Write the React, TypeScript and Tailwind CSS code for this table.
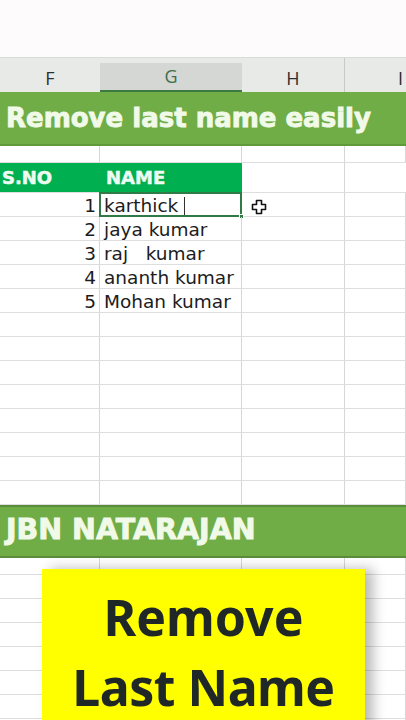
import React from 'react';

const cols = [100, 142, 103, 61];

const names = ['karthick', 'jaya kumar', 'raj   kumar', 'ananth kumar', 'Mohan kumar'];

// plain grid row, four cells with the sheet's gridlines
const Row: React.FC<{ h: string; children?: React.ReactNode[] }> = ({ h, children }) => (
  <div className={`flex ${h} border-b border-[#dedede]`}>
    {cols.map((w, i) => (
      <div
        key={i}
        className="relative shrink-0 border-r border-[#d6d6d6] h-full"
        style={{ width: w }}
      >
        {children ? children[i] : null}
      </div>
    ))}
  </div>
);

const PlusCursor = () => (
  <svg width="16" height="16" viewBox="0 0 16 16" className="absolute left-[9px] top-[6px]">
    <path
      d="M5.5 1.5h5v4h4v5h-4v4h-5v-4h-4v-5h4z"
      fill="#fff"
      stroke="#111"
      strokeWidth="1.6"
      strokeLinejoin="round"
    />
  </svg>
);

const Banner: React.FC<{ text: string; className: string }> = ({ text, className }) => (
  <div
    className={`flex items-center bg-[#70ad47] px-[6px] text-[#f1fae9] font-bold font-['DejaVu_Sans',sans-serif] [-webkit-text-stroke:0.9px_#f1fae9] ${className}`}
  >
    {text}
  </div>
);

export default function App() {
  return (
    <div className="relative w-[406px] h-[720px] overflow-hidden bg-white font-['DejaVu_Sans',sans-serif]">
      {/* empty strip above the sheet */}
      <div className="h-[57px] bg-[#fdfbfc]" />

      {/* column headers */}
      <div className="flex h-[35px] bg-[#e8eae8] border-t border-[#d9dbd9] text-[18px] text-[#2e2e2e] font-['Open_Sans',sans-serif]">
        <div className="w-[100px] shrink-0 flex flex-col">
          <div className="h-[10px]" />
          <div className="flex-1 flex items-center justify-center">F</div>
        </div>
        <div className="w-[142px] shrink-0 flex flex-col">
          <div className="h-[10px]" />
          <div className="flex-1 flex items-center justify-center bg-[#d5d7d5] border-b-2 border-[#3d7a3d] text-[#3f6f4a]">
            G
          </div>
        </div>
        <div className="w-[103px] shrink-0 flex flex-col border-r border-[#c8cac8]">
          <div className="h-[10px] bg-[#e8eae8]" />
          <div className="flex-1 flex items-center justify-center">H</div>
        </div>
        <div className="w-[61px] shrink-0 flex flex-col">
          <div className="h-[10px]" />
          <div className="flex-1 flex items-center justify-end pr-[3px]">I</div>
        </div>
      </div>

      <Banner text="Remove last name easily" className="h-[54px] text-[26px] border-b-2 border-[#5f9a3c]" />

      <Row h="h-[17px]" />

      {/* table header */}
      <div className="flex h-[30px] border-b border-[#dedede] text-[18px] font-bold text-[#eefbf2] [-webkit-text-stroke:0.5px_#eefbf2]">
        <div className="w-[242px] shrink-0 flex items-center bg-[#00b050]">
          <div className="w-[100px] pl-[2px]">S.NO</div>
          <div className="pl-[6px]">NAME</div>
        </div>
        <div className="w-[103px] shrink-0 border-r border-[#d6d6d6]" />
        <div className="w-[61px] shrink-0" />
      </div>

      {/* data rows */}
      <div className="text-[18.5px] text-[#1c1c1c] leading-[26px]">
        {names.map((n, i) => (
          <Row
            key={n}
            h="h-[24px]"
          >
            {[
              <div className="text-right pr-[3px]">{i + 1}</div>,
              <div className="pl-[4px] whitespace-pre">
                {n}
                {i === 0 && (
                  <>
                    <span className="inline-block w-[1px] h-[20px] bg-[#333] align-middle ml-[6px]" />
                    <div className="absolute -top-[1px] -left-[1px] w-[143px] h-[25px] border-2 border-[#2f7a46]" />
                    <div className="absolute -bottom-[3px] -right-[3px] w-[5px] h-[5px] bg-[#2f7a46] border border-white" />
                  </>
                )}
              </div>,
              i === 0 ? <PlusCursor /> : null,
              null,
            ]}
          </Row>
        ))}
        {Array.from({ length: 8 }).map((_, i) => (
          <Row key={i} h="h-[24px]" />
        ))}
      </div>

      <Banner
        text="JBN NATARAJAN"
        className="h-[53px] text-[28.5px] border-t-2 border-b-2 border-[#5a8e3a] pb-[2px]"
      />

      <Row h="h-[17px]" />
      {Array.from({ length: 7 }).map((_, i) => (
        <Row key={i} h="h-[24px]" />
      ))}

      {/* yellow title card over the sheet */}
      <div className="absolute left-[42px] top-[569px] w-[323px] h-[170px] bg-[#ffff00] shadow-[8px_0_12px_rgba(0,0,0,0.28)] pt-[13px] text-center text-[50px] leading-[70px] font-bold text-[#1f2727] font-['Noto_Sans',sans-serif]">
        <div>Remove</div>
        <div className="tracking-[-0.5px]">Last Name</div>
      </div>
    </div>
  );
}
